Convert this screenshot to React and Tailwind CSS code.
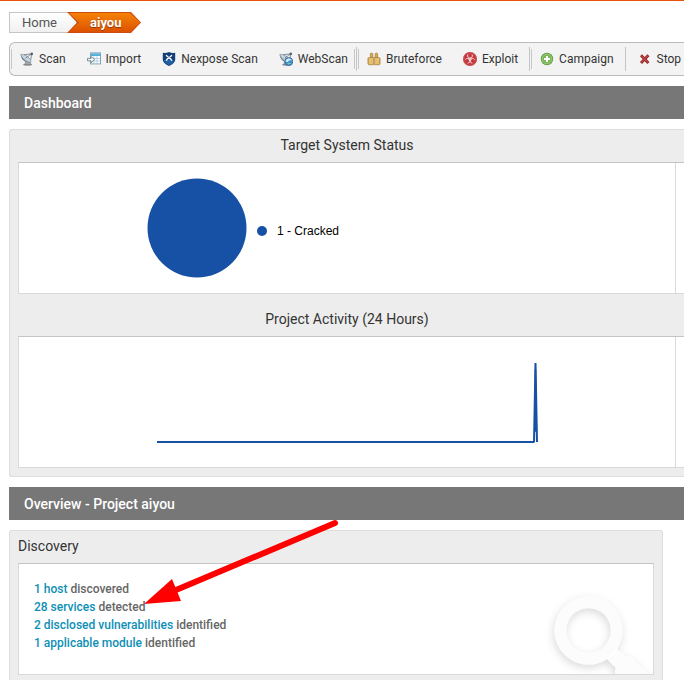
const discoveries = [
  { link: '1 host', rest: 'discovered' },
  { link: '28 services', rest: 'detected' },
  { link: '2 disclosed vulnerabilities', rest: 'identified' },
  { link: '1 applicable module', rest: 'identified' }
];

const Icon = ({ children }) => (
  <svg className="w-[14px] h-[14px] shrink-0" viewBox="0 0 14 14" fill="none" aria-hidden="true">
    {children}
  </svg>
);

const Dish = () => (
  <>
    <ellipse cx="7.6" cy="12.6" rx="4.6" ry="1.2" fill="#8d9297" />
    <path d="M5 12.4 L6 9 H9.5 L10.6 12.4 Z" fill="#a6abb0" stroke="#6b7075" strokeWidth="0.5" />
    <path d="M0.8 2.4 C0.8 7 4.5 11.2 11 10.2 Z" fill="#6f7a84" />
    <path d="M0.8 2.4 C5 1.6 11.4 6.4 11 10.2 C7 10.6 2 6.6 0.8 2.4 Z" fill="#c3d5e3" stroke="#7d8790" strokeWidth="0.6" />
    <path d="M5.6 6.2 L11.6 1.8 M4 2.8 L11.6 1.8 L10.8 7.8" stroke="#69737d" strokeWidth="0.8" />
    <circle cx="11.8" cy="1.9" r="1.3" fill="#59636d" />
  </>
);

const ScanIcon = () => <Icon><Dish /></Icon>;

const ImportIcon = () => (
  <Icon>
    <rect x="3.5" y="0.9" width="10" height="11" fill="#fff" stroke="#7fa3b8" />
    <rect x="4" y="1.4" width="9" height="2.6" fill="#57b0dc" />
    <path d="M4 6.5 H13 M4 9 H13 M6.8 4 V11.4 M10 4 V11.4" stroke="#a9c9dc" strokeWidth="0.8" />
    <path d="M0.5 6.4 H4 V4.5 L7.6 7.6 L4 10.7 V8.8 H0.5 Z" fill="#f7f9f9" stroke="#718087" strokeWidth="0.9" />
  </Icon>
);

const NexposeIcon = () => (
  <Icon>
    <path d="M0.8 0.8 Q4.5 1.2 7 0 Q9.5 1.2 13.2 0.8 V8 Q12.6 11.6 7 14 Q1.4 11.6 0.8 8 Z" fill="#143f78" />
    <path d="M1.6 8.6 Q7 6.4 12.4 8.6 Q11 11.8 7 13.3 Q3 11.8 1.6 8.6 Z" fill="#205fa5" />
    <path d="M4.2 3 Q5.4 5.4 7 5.4 Q8.6 5.4 9.8 3 M4.2 8.6 Q5.4 6 7 6 Q8.6 6 9.8 8.6" stroke="#fff" strokeWidth="1.4" />
  </Icon>
);

const WebScanIcon = () => (
  <Icon>
    <Dish />
    <circle cx="9.8" cy="9.6" r="4" fill="#3e8fc9" stroke="#2c6391" strokeWidth="0.7" />
    <path d="M6.4 9 Q8 6 10.5 6.4 Q12.4 6.8 13 8.6 Q10 7.8 9 9.8 Q7.6 10.4 6.4 9 Z" fill="#d7eff7" />
    <path d="M8 11.4 Q10 10.2 12.4 11.2 Q10.5 13.4 8 11.4 Z" fill="#7fc4b2" />
  </Icon>
);

const BruteforceIcon = () => (
  <Icon>
    <g fill="#d9a94e" stroke="#9a7230" strokeWidth="0.6">
      <path d="M3.4 6 V1.6 Q4.6 0.4 5.8 1.6 V6 Z" />
      <path d="M8.2 6 V1.6 Q9.4 0.4 10.6 1.6 V6 Z" />
      <path d="M0.9 6.2 Q2.6 4.8 6.4 5.4 V12.8 H2 Q0.9 12.6 0.9 11.4 Z" />
      <path d="M13.1 6.2 Q11.4 4.8 7.6 5.4 V12.8 H12 Q13.1 12.6 13.1 11.4 Z" />
    </g>
    <path d="M2 7 H6 M2 9 H6 M2 11 H6 M8 7 H12 M8 9 H12 M8 11 H12" stroke="#f6dd94" strokeWidth="0.9" />
  </Icon>
);

const ExploitIcon = () => (
  <Icon>
    <circle cx="7" cy="7" r="7" fill="#c2373b" />
    <circle cx="7" cy="7" r="6.3" stroke="#d8686a" strokeWidth="0.6" />
    <g stroke="#f7dede" strokeWidth="1">
      <path d="M5 2.4 A2.4 2.4 0 1 0 9 2.4" />
      <path d="M2.4 7.6 A2.4 2.4 0 1 1 4.6 11.2" />
      <path d="M11.6 7.6 A2.4 2.4 0 1 0 9.4 11.2" />
      <circle cx="7" cy="7.4" r="1.2" />
    </g>
  </Icon>
);

const CampaignIcon = () => (
  <Icon>
    <circle cx="7" cy="7" r="6.2" fill="#5f9a3c" />
    <circle cx="7" cy="7" r="4.9" fill="#7cb756" stroke="#a9d18f" strokeWidth="0.8" />
    <path d="M7 4 V10 M4 7 H10" stroke="#fff" strokeWidth="2" />
  </Icon>
);

const StopIcon = () => (
  <Icon>
    <path d="M3 3.2 L10.4 11 M10.4 3.2 L3 11" stroke="#8c2424" strokeWidth="2.8" />
    <path d="M3.4 3.6 L10 10.6 M10 3.6 L3.4 10.6" stroke="#c04040" strokeWidth="1.4" />
  </Icon>
);

function ToolButton({ icon, label }) {
  return (
    <button type="button" className="flex items-center gap-[5px] shrink-0 whitespace-nowrap text-[12px] text-[#333]">
      {icon}
      {label}
    </button>
  );
}

function ToolGroup({ children }) {
  return <div className="flex items-center gap-[21px] shrink-0 pl-2 pr-[11px]">{children}</div>;
}

const ShortLine = () => <span className="w-px h-5 shrink-0 bg-[#c8c8c8]" />;
const TallLine = () => <span className="w-px h-6 shrink-0 bg-[#c4c4c4]" />;

function SectionBar({ title }) {
  return (
    <h2 className="h-[33px] flex items-center pt-px pl-[15px] bg-[#777] text-white text-[14px] font-medium">
      {title}
    </h2>
  );
}

function ChartRow({ children }) {
  return (
    <div className="flex ml-2 h-[132px] border border-r-0 border-[#d9d9d9] border-t-[#c4c4c4] bg-white">
      <div className="flex-1">{children}</div>
      <div className="w-[9px] border-l border-[#d9d9d9]" />
    </div>
  );
}

function Breadcrumbs() {
  return (
    <nav className="flex h-[21px] text-[13px] leading-[19px]">
      <a
        href="#"
        className="w-[68px] pl-3 border border-[#c4c4c4] bg-linear-to-b from-white to-[#f0f0f0] text-[#555]"
      >
        Home
      </a>
      <a
        href="#"
        className="-ml-[10px] w-[74px] p-px bg-[#cf4c0c] text-white font-bold [clip-path:polygon(0_0,64px_0,100%_50%,64px_100%,0_100%,10px_50%)]"
      >
        <span className="block pl-[22px] bg-linear-to-b from-[#f58208] to-[#dc5000] [text-shadow:0_1px_1px_#8a3400] [clip-path:polygon(1px_0,62px_0,100%_50%,62px_100%,1px_100%,11px_50%)]">
          aiyou
        </span>
      </a>
    </nav>
  );
}

function Magnifier() {
  return (
    <svg className="absolute right-0 bottom-0 w-[110px] h-[100px]" viewBox="0 0 110 100" aria-hidden="true">
      <defs>
        <filter id="soft" x="-30%" y="-30%" width="160%" height="160%">
          <feDropShadow dx="-1" dy="3" stdDeviation="4" floodColor="#000" floodOpacity="0.15" />
        </filter>
      </defs>
      <g filter="url(#soft)" fill="#fcfcfc">
        <path
          fillRule="evenodd"
          d="M45.5 22.5 a34 34 0 1 1 0 68 a34 34 0 1 1 0 -68 Z M45.5 34 a22.5 22.5 0 1 0 0 45 a22.5 22.5 0 1 0 0 -45 Z"
        />
        <path d="M64 85 L74 75 L83 83 Q88 82 93 88 L118 112 L76 112 L73 101 Q71 97 73 94 Z" />
      </g>
      <path d="M64 84 Q70 81 74 75" stroke="#fff" strokeWidth="1.5" fill="none" />
    </svg>
  );
}

function App() {
  return (
    <div className="min-h-screen overflow-hidden bg-white border-t border-[#e8520a] pl-[9px] font-['Roboto',sans-serif] text-[#333]">
      <header className="pt-[11px]">
        <Breadcrumbs />
        <div className="mt-[9px] h-[34px] flex items-center overflow-hidden border border-r-0 border-[#bbb] rounded-l-[6px] bg-[#f3f3f3] pl-px">
          <ShortLine />
          <div className="flex items-center shrink-0 gap-[21px] pl-2 pr-[6px]">
            <ToolButton icon={<ScanIcon />} label="Scan" />
            <ToolButton icon={<ImportIcon />} label="Import" />
            <ToolButton icon={<NexposeIcon />} label="Nexpose Scan" />
            <ToolButton icon={<WebScanIcon />} label="WebScan" />
          </div>
          <div className="flex items-center shrink-0 gap-px">
            <ShortLine />
            <TallLine />
            <ShortLine />
          </div>
          <ToolGroup>
            <ToolButton icon={<BruteforceIcon />} label="Bruteforce" />
            <ToolButton icon={<ExploitIcon />} label="Exploit" />
          </ToolGroup>
          <div className="flex items-center shrink-0 gap-px">
            <TallLine />
            <ShortLine />
          </div>
          <ToolGroup>
            <ToolButton icon={<CampaignIcon />} label="Campaign" />
          </ToolGroup>
          <TallLine />
          <div className="shrink-0 pl-3">
            <ToolButton icon={<StopIcon />} label="Stop" />
          </div>
        </div>
      </header>

      <main className="pt-[10px]">
        <SectionBar title="Dashboard" />
        <section className="mt-[10px] pb-2 border border-r-0 border-[#ddd] rounded-l-[3px] bg-[#ededed]">
          <h3 className="h-8 pb-0.5 flex items-center justify-center text-[14px]">Target System Status</h3>
          <ChartRow>
            <div className="flex items-center pl-32 pt-[15px]">
              <svg className="w-[100px] h-[100px]" viewBox="0 0 100 100" role="img" aria-label="Cracked: 1">
                <circle cx="50" cy="50" r="49.5" fill="#1751a6" />
              </svg>
              <span className="ml-[10px] mt-[5px] w-[10px] h-[10px] rounded-full bg-[#1751a6]" />
              <span className="ml-[10px] mt-[5px] font-['Liberation_Sans',sans-serif] text-[12px] text-black">
                1 - Cracked
              </span>
            </div>
          </ChartRow>
          <h3 className="h-[42px] pt-2 flex items-center justify-center text-[14px]">
            Project Activity (24 Hours)
          </h3>
          <ChartRow>
            <div className="flex justify-center pt-6">
              <svg className="w-[382px] h-[84px]" viewBox="0 0 382 84" fill="none" role="img" aria-label="Activity">
                <path d="M1 81 H378 L379.5 2 L381 81" stroke="#1751a6" strokeWidth="2" strokeLinejoin="bevel" />
                <path d="M378.8 70 L379.5 8 L380.4 70 Z" fill="#1751a6" stroke="#1751a6" strokeWidth="1.5" />
              </svg>
            </div>
          </ChartRow>
        </section>

        <div className="relative mt-[10px]">
          <SectionBar title="Overview - Project aiyou" />
          <section className="mt-[10px] mr-[21px] px-2 pb-[5px] border border-b-0 border-[#ddd] rounded-t-[3px] bg-[#ededed]">
            <h3 className="h-8 pb-0.5 flex items-center text-[14px]">Discovery</h3>
            <div className="relative h-[112px] pt-4 pl-[15px] overflow-hidden border border-[#d9d9d9] border-t-[#c4c4c4] bg-white">
              <Magnifier />
              <ul className="relative text-[12px] leading-[18px] font-medium text-[#666]">
                {discoveries.map((item) => (
                  <li key={item.link}>
                    <a href="#" className="text-[#0d8fb5]">{item.link}</a> {item.rest}
                  </li>
                ))}
              </ul>
            </div>
          </section>
          <svg
            className="absolute left-[135px] top-[32px] w-[200px] h-[88px] pointer-events-none"
            viewBox="0 0 200 88"
            aria-hidden="true"
          >
            <path d="M191 4 L32 71" stroke="#f00" strokeWidth="6" strokeLinecap="round" />
            <path d="M0 85 L28 60 L37 82 Z" fill="#f00" />
          </svg>
        </div>
      </main>
    </div>
  );
}

export default App;
